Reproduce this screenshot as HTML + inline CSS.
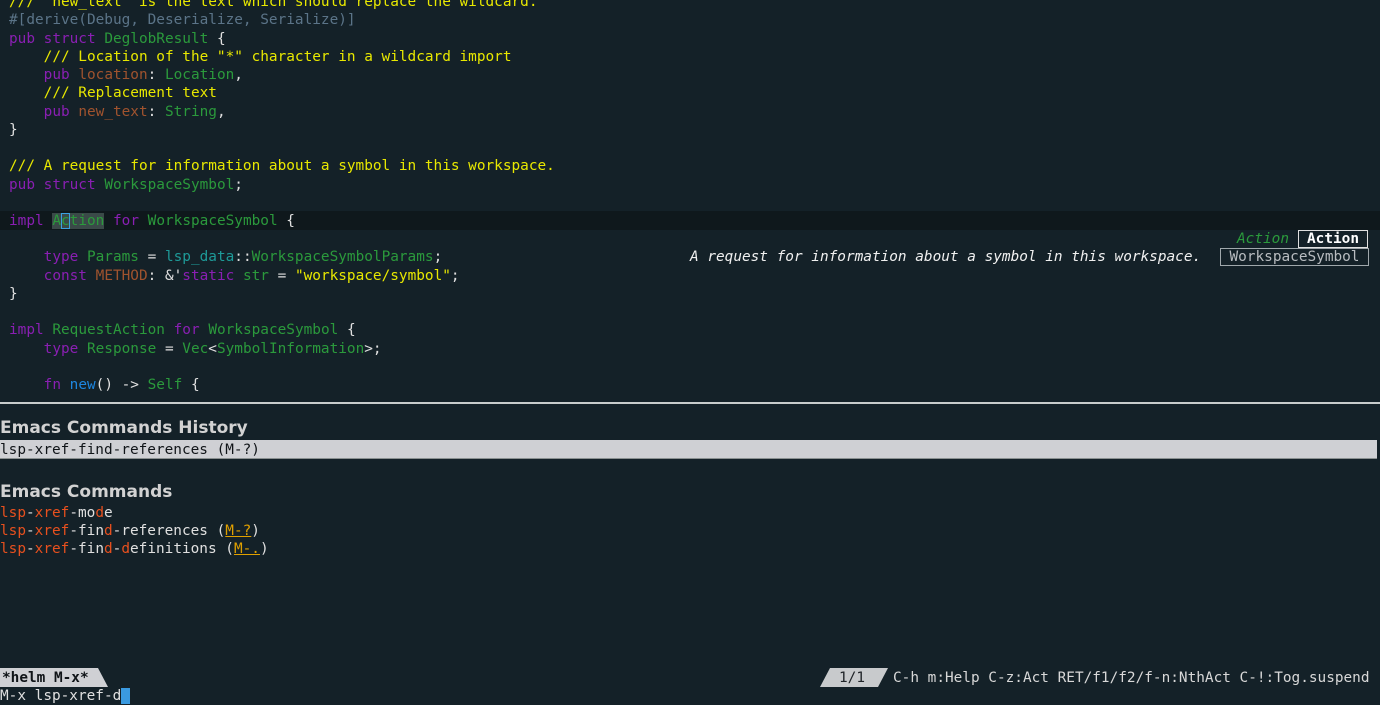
<!DOCTYPE html>
<html><head><meta charset="utf-8"><style>
html,body{margin:0;padding:0;}
body{width:1380px;height:694px;background:#142128;overflow:hidden;position:relative;font-family:"DejaVu Sans Mono","Liberation Mono",monospace;font-size:14.4px;color:#e0e0e0;}
.l{position:absolute;left:9px;height:18.25px;line-height:18.25px;white-space:pre;margin-top:1px;}
.k{color:#8a1fb3}.t{color:#2b9a3c}.y{color:#e8e800}.c{color:#5b7488}.o{color:#a0532e}.q{color:#1e9a98}.b{color:#1d86e0}
.h{position:absolute;left:0;font-family:"DejaVu Sans","Liberation Sans",sans-serif;font-weight:bold;font-size:17px;color:#d2d2d2;line-height:22px;}
.r{color:#e8501e}
.u{color:#e0a000;text-decoration:underline}
</style></head><body>
<div style="position:absolute;left:0;top:211px;width:1380px;height:19px;background:#0f181c"></div>
<div class="l" style="top:-8px"><span class="y">/// `new_text` is the text which should replace the wildcard.</span></div>
<div class="l c" style="top:10px">#[derive(Debug, Deserialize, Serialize)]</div>
<div class="l" style="top:29px"><span class="k">pub struct</span> <span class="t">DeglobResult</span> {</div>
<div class="l y" style="top:47px">    /// Location of the "*" character in a wildcard import</div>
<div class="l" style="top:65px">    <span class="k">pub</span> <span class="o">location</span>: <span class="t">Location</span>,</div>
<div class="l y" style="top:83px">    /// Replacement text</div>
<div class="l" style="top:102px">    <span class="k">pub</span> <span class="o">new_text</span>: <span class="t">String</span>,</div>
<div class="l" style="top:120px">}</div>
<div class="l y" style="top:156px">/// A request for information about a symbol in this workspace.</div>
<div class="l" style="top:175px"><span class="k">pub struct</span> <span class="t">WorkspaceSymbol</span>;</div>
<div class="l" style="top:211px"><span class="k">impl</span> <span class="t" style="background:#3a4a48">A<span style="outline:1px solid #3aa0e0;outline-offset:-1px">c</span>tion</span> <span class="k">for</span> <span class="t">WorkspaceSymbol</span> {</div>
<div class="l" style="top:247px">    <span class="k">type</span> <span class="t">Params</span> = <span class="q">lsp_data</span>::<span class="t">WorkspaceSymbolParams</span>;</div>
<div class="l" style="top:266px">    <span class="k">const</span> <span class="o">METHOD</span>: &amp;'<span class="k">static</span> <span class="t">str</span> = <span class="y">"workspace/symbol"</span>;</div>
<div class="l" style="top:284px">}</div>
<div class="l" style="top:320px"><span class="k">impl</span> <span class="t">RequestAction</span> <span class="k">for</span> <span class="t">WorkspaceSymbol</span> {</div>
<div class="l" style="top:339px">    <span class="k">type</span> <span class="t">Response</span> = <span class="t">Vec</span>&lt;<span class="t">SymbolInformation</span>&gt;;</div>
<div class="l" style="top:375px">    <span class="k">fn</span> <span class="b">new</span>() -&gt; <span class="t">Self</span> {</div>
<!-- sideline -->
<div class="l" style="left:1237px;top:229px;font-style:italic;color:#2b9a3c">Action</div>
<div style="position:absolute;left:1298px;top:230px;width:70px;height:18px;border:1px solid #e0e0e0;box-sizing:border-box;font-weight:bold;color:#fff;line-height:16px;text-align:center">Action</div>
<div class="l" style="left:690px;top:247px;font-style:italic;color:#f0f0f0">A request for information about a symbol in this workspace.</div>
<div style="position:absolute;left:1220px;top:248px;width:149px;height:18px;border:1px solid #a0a8ac;box-sizing:border-box;color:#b8bcc0;line-height:17px;text-align:center">WorkspaceSymbol</div>
<!-- separator -->
<div style="position:absolute;left:0;top:402px;width:1380px;height:2px;background:#c8cccc"></div>
<div class="h" style="top:417px">Emacs Commands History</div>
<div style="position:absolute;left:0;top:440px;width:1377px;height:18px;background:#cfd0d4;border-bottom:1px solid #8a9090"></div>
<div class="l" style="left:0;top:440px;color:#101418">lsp-xref-find-references (M-?)</div>
<div class="h" style="top:481px">Emacs Commands</div>
<div class="l" style="left:0;top:503px"><span class="r">lsp</span>-<span class="r">xref</span>-mo<span class="r">d</span>e</div>
<div class="l" style="left:0;top:521px"><span class="r">lsp</span>-<span class="r">xref</span>-fin<span class="r">d</span>-references (<span class="u">M-?</span>)</div>
<div class="l" style="left:0;top:539px"><span class="r">lsp</span>-<span class="r">xref</span>-fin<span class="r">d</span>-<span class="r">d</span>efinitions (<span class="u">M-.</span>)</div>
<!-- mode line -->
<svg style="position:absolute;left:0;top:668px" width="110" height="19"><polygon points="0,0 98,0 108,19 0,19" fill="#cfd0d4"/></svg>
<div class="l" style="left:2px;top:668px;font-weight:bold;color:#101418">*helm M-x*</div>
<svg style="position:absolute;left:818px;top:668px" width="70" height="19"><polygon points="12,0 70,0 60,19 2,19" fill="#c8cacc"/></svg>
<div class="l" style="left:839px;top:668px;color:#202428">1/1</div>
<div class="l" style="left:893px;top:668px;color:#d8d8d8">C-h m:Help C-z:Act RET/f1/f2/f-n:NthAct C-!:Tog.suspend</div>
<div class="l" style="left:0;top:686px;color:#e0e0e0">M-x lsp-xref-d<span style="background:#3a9ae0">&#160;</span></div>
</body></html>
